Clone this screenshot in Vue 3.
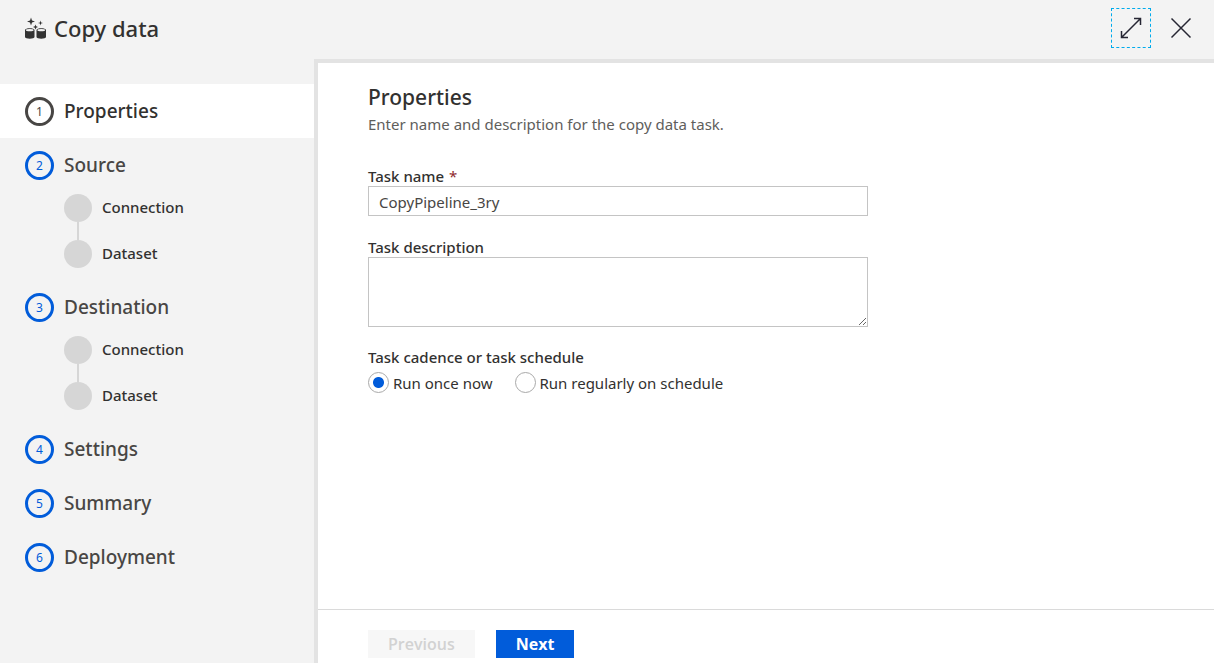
<script setup>
import { ref } from 'vue'

const steps = [
  { label: 'Properties', active: true },
  { label: 'Source', children: ['Connection', 'Dataset'] },
  { label: 'Destination', children: ['Connection', 'Dataset'] },
  { label: 'Settings' },
  { label: 'Summary' },
  { label: 'Deployment' },
]

const taskName = ref('CopyPipeline_3ry')
const description = ref('')
const cadence = ref('once')
</script>

<template>
  <div class="dialog">
    <header class="top">
      <svg class="logo" viewBox="0 0 21 22" aria-hidden="true">
        <path d="M6 .5L7 3.500L10 4.500L7 5.500L6 8.500L5 5.500L2 4.500L5 3.500ZM15.500 3.500L16.100 5.400L18 6L16.100 6.600L15.500 8.500L14.900 6.600L13 6L14.900 5.400ZM10.500 7.500L11.200 9.300L13 10L11.200 10.700L10.500 12.500L9.800 10.700L8 10L9.800 9.300Z" fill="#333" />
        <g v-for="x in [0, 11.5]" :key="x" :transform="`translate(${x} 0)`">
          <path d="M0 13V20C0 22.300 9.500 22.300 9.500 20V13C9.500 10.800 0 10.800 0 13Z" fill="#333" />
          <ellipse cx="4.750" cy="13.200" rx="3.800" ry="1.100" fill="#f3f3f3" />
        </g>
      </svg>
      <h1>Copy data</h1>
      <button class="tool expand" type="button" aria-label="Expand">
        <svg viewBox="0 0 22 22"><path d="M1.500 20.500L20.500 1.500M14 1.500H20.500V8M1.500 14V20.500H8" /></svg>
      </button>
      <button class="tool" type="button" aria-label="Close">
        <svg viewBox="0 0 22 22"><path d="M1.500 1.500L20.500 20.500M20.500 1.500L1.500 20.500" /></svg>
      </button>
    </header>

    <div class="body">
      <nav class="sidebar">
        <ol>
          <li v-for="(step, i) in steps" :key="step.label">
            <a href="#" class="step" :class="{ active: step.active }">
              <span class="number">{{ i + 1 }}</span>
              <span>{{ step.label }}</span>
            </a>
            <ul v-if="step.children" class="children">
              <li v-for="child in step.children" :key="child">
                <a href="#" class="child"><span class="dot"></span><span>{{ child }}</span></a>
              </li>
            </ul>
          </li>
        </ol>
      </nav>

      <main class="panel">
        <form class="form" @submit.prevent>
          <h2>Properties</h2>
          <p>Enter name and description for the copy data task.</p>

          <label class="label" for="task-name">Task name <span class="required">*</span></label>
          <input id="task-name" v-model="taskName" class="field" type="text" spellcheck="false" />

          <label class="label" for="task-description">Task description</label>
          <textarea id="task-description" v-model="description" class="field area"></textarea>

          <fieldset>
            <legend class="label">Task cadence or task schedule</legend>
            <div class="options">
              <label><input v-model="cadence" type="radio" name="cadence" value="once" />Run once now</label>
              <label><input v-model="cadence" type="radio" name="cadence" value="schedule" />Run regularly on schedule</label>
            </div>
          </fieldset>
        </form>

        <footer>
          <button class="action" type="button" disabled>Previous</button>
          <button class="action next" type="button">Next</button>
        </footer>
      </main>
    </div>
  </div>
</template>

<style>
body {
  margin: 0;
  background: #f3f3f3;
}
</style>

<style scoped>
.dialog {
  display: flex;
  flex-direction: column;
  min-height: 100vh;
  box-sizing: border-box;
  background: #f3f3f3;
  color: #323130;
  font-family: "Noto Sans", "Open Sans", sans-serif;
  font-size: 15px;
}
.top {
  display: flex;
  align-items: center;
  height: 59px;
  box-sizing: border-box;
  padding: 0 13px 3px 25px;
}
.logo {
  width: 21px;
  height: 22px;
}
h1 {
  flex: 1;
  margin: 0 0 0 8px;
  font-size: 22px;
  font-weight: 500;
}
.tool {
  display: grid;
  place-items: center;
  width: 40px;
  height: 40px;
  margin-left: 10px;
  padding: 0;
  border: 1px solid transparent;
  background: none;
}
.expand {
  border: 1px dashed #00abec;
}
.tool svg {
  width: 22px;
  height: 22px;
  fill: none;
  stroke: #262633;
  stroke-width: 1.5;
}
.body {
  display: flex;
  flex: 1;
}
.sidebar {
  width: 314px;
  flex: none;
  padding-top: 25px;
}
ol,
ul {
  margin: 0;
  padding: 0;
  list-style: none;
}
a {
  color: inherit;
  text-decoration: none;
}
.step {
  display: flex;
  align-items: center;
  gap: 10px;
  height: 54px;
  padding-left: 25px;
  color: #484644;
  font-size: 19px;
  font-weight: 500;
}
.step.active {
  background: #fff;
  color: #323130;
}
.number {
  display: grid;
  place-items: center;
  width: 29px;
  height: 29px;
  box-sizing: border-box;
  border: 3px solid #015cda;
  border-radius: 50%;
  color: #015cda;
  font-size: 12px;
  font-weight: 400;
}
.active .number {
  border-color: #484644;
  color: #484644;
}
.children {
  display: grid;
  gap: 18px;
  padding: 2px 0 12px 64px;
}
.child {
  display: flex;
  align-items: center;
  gap: 10px;
  height: 28px;
  font-size: 15px;
  font-weight: 500;
  line-height: 20px;
}
.child span:last-child {
  padding-bottom: 2px;
}
.dot {
  position: relative;
  width: 28px;
  height: 28px;
  border-radius: 50%;
  background: #d6d6d6;
}
.children li:first-child .dot::after {
  content: "";
  position: absolute;
  top: 28px;
  left: 13px;
  width: 2px;
  height: 18px;
  background: #d6d6d6;
}
.panel {
  display: flex;
  flex: 1;
  flex-direction: column;
  border-top: 4px solid #e3e3e3;
  border-left: 4px solid #e3e3e3;
  background: #fff;
}
.form {
  flex: 1;
  padding: 19px 50px;
}
h2 {
  margin: 0;
  font-size: 21px;
  font-weight: 500;
  line-height: 30px;
}
p {
  margin: 0 0 30px;
  color: #605e5c;
  line-height: 24px;
}
.label {
  display: block;
  padding: 0;
  font-weight: 500;
  line-height: 20px;
}
.required {
  margin-left: 1px;
  color: #8e2a2e;
  font-weight: 400;
}
.field {
  display: block;
  width: 100%;
  max-width: 500px;
  height: 30px;
  box-sizing: border-box;
  margin: 0 0 21px;
  padding: 2px 10px 0;
  border: 1px solid #c4c4c4;
  background: #fff;
  color: #484644;
  font: inherit;
  outline: none;
}
.area {
  height: 70px;
  margin-bottom: 20px;
}
fieldset {
  margin: 0;
  padding: 0;
  border: 0;
}
.options {
  display: flex;
  gap: 22px;
  padding-top: 5px;
}
.options label {
  display: flex;
  align-items: center;
  gap: 4px;
}
.options input {
  appearance: none;
  width: 21px;
  height: 21px;
  box-sizing: border-box;
  margin: 0;
  border: 1px solid #a9a9a9;
  border-radius: 50%;
}
.options input:checked {
  background: radial-gradient(circle, #015cda 5px, #fff 6px);
}
footer {
  display: flex;
  align-items: flex-start;
  gap: 21px;
  height: 54px;
  box-sizing: border-box;
  padding: 20px 50px 0;
  border-top: 1px solid #dadada;
}
.action {
  height: 28px;
  padding: 0 20px;
  border: 0;
  background: #f7f7f7;
  color: #d2d2d2;
  font-family: "Open Sans", "Noto Sans", sans-serif;
  font-size: 16px;
  font-weight: 600;
}
.next {
  background: #015cda;
  color: #fff;
  font-weight: 700;
}
</style>
